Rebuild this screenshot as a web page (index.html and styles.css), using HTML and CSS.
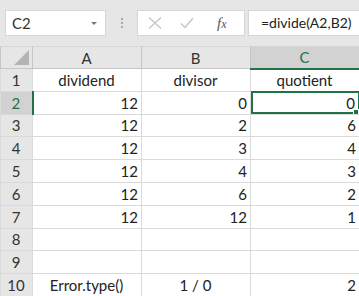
FILE: index.html
```
<!DOCTYPE html>
<html lang="en">
<head>
  <meta charset="UTF-8">
  <title>divide</title>
  <link rel="stylesheet" href="styles.css">
</head>
<body>

  <div class="toolbar">
    <div class="namebox">
      <span>C2</span>
      <span class="arrow"></span>
    </div>
    <div class="dots">
      <span></span><span></span><span></span>
    </div>
    <div class="fxbox">
      <svg class="cancel" width="14" height="12" viewBox="0 0 14 12">
        <path d="M1 0.5 L13 11.5 M13 0.5 L1 11.5" stroke="#c6c6c6" stroke-width="1.4" fill="none"/>
      </svg>
      <svg class="enter" width="14" height="12" viewBox="0 0 14 12">
        <path d="M1 6.5 L5 10.5 L13 1" stroke="#c6c6c6" stroke-width="1.4" fill="none"/>
      </svg>
      <span class="fx">f<i>x</i></span>
    </div>
    <div class="formula">=divide(A2,B2)</div>
  </div>

  <table class="sheet">
    <colgroup>
      <col class="c-rh">
      <col class="c-a">
      <col class="c-b">
      <col class="c-c">
    </colgroup>
    <tr class="colheads">
      <th class="corner"><span class="tri"></span></th>
      <th>A</th>
      <th>B</th>
      <th class="sel">C</th>
    </tr>
    <tr>
      <th class="rh">1</th>
      <td class="mid">dividend</td>
      <td class="mid">divisor</td>
      <td class="mid">quotient</td>
    </tr>
    <tr>
      <th class="rh sel">2</th>
      <td>12</td>
      <td>0</td>
      <td class="active">0<span class="handle"></span></td>
    </tr>
    <tr>
      <th class="rh">3</th>
      <td>12</td>
      <td>2</td>
      <td>6</td>
    </tr>
    <tr>
      <th class="rh">4</th>
      <td>12</td>
      <td>3</td>
      <td>4</td>
    </tr>
    <tr>
      <th class="rh">5</th>
      <td>12</td>
      <td>4</td>
      <td>3</td>
    </tr>
    <tr>
      <th class="rh">6</th>
      <td>12</td>
      <td>6</td>
      <td>2</td>
    </tr>
    <tr>
      <th class="rh">7</th>
      <td>12</td>
      <td>12</td>
      <td>1</td>
    </tr>
    <tr>
      <th class="rh">8</th>
      <td></td>
      <td></td>
      <td></td>
    </tr>
    <tr>
      <th class="rh">9</th>
      <td></td>
      <td></td>
      <td></td>
    </tr>
    <tr>
      <th class="rh">10</th>
      <td class="mid">Error.type()</td>
      <td class="mid">1 / 0</td>
      <td>2</td>
    </tr>
  </table>

</body>
</html>
```

FILE: styles.css
```
body {
  margin: 0;
  background-color: #fff;
  font-family: Lato, "Open Sans", sans-serif;
  color: #222;
  overflow: hidden;
}

.toolbar {
  display: flex;
  align-items: flex-start;
  height: 46px;
  padding: 10px 0 0 5px;
  box-sizing: border-box;
  background-color: #e6e6e6;
}

.namebox {
  display: flex;
  align-items: center;
  justify-content: space-between;
  width: 101px;
  height: 26px;
  padding: 0 8px 0 6px;
  box-sizing: border-box;
  background-color: #fff;
  border: 1px solid #d6d6d6;
  font-size: 15px;
  color: #333;
}

.arrow {
  width: 0;
  height: 0;
  border-left: 3px solid transparent;
  border-right: 3px solid transparent;
  border-top: 3px solid #777;
}

.dots {
  display: flex;
  flex-direction: column;
  gap: 2px;
  width: 31px;
  padding-top: 8px;
  align-items: center;
}

.dots span {
  width: 2px;
  height: 2px;
  background-color: #a8a8a8;
}

.fxbox {
  display: flex;
  align-items: center;
  width: 108px;
  height: 26px;
  box-sizing: border-box;
  background-color: #fff;
  border: 1px solid #d6d6d6;
}

.cancel {
  margin-left: 10px;
}

.enter {
  margin-left: 18px;
}

.fx {
  margin-left: 23px;
  font-family: "Liberation Serif", serif;
  font-style: italic;
  font-size: 15px;
  color: #555;
}

.fx i {
  font-size: 12px;
}

.formula {
  flex: 1;
  height: 26px;
  margin-left: 3px;
  padding-left: 12px;
  box-sizing: border-box;
  background-color: #fff;
  border: 1px solid #d6d6d6;
  border-right: none;
  font-size: 14px;
  line-height: 24px;
  color: #222;
  white-space: nowrap;
  overflow: hidden;
}

.sheet {
  border-collapse: collapse;
  table-layout: fixed;
  width: 359px;
}

.c-rh { width: 32px; }
.c-a { width: 109px; }
.c-b { width: 109px; }
.c-c { width: 109px; }

.sheet tr {
  height: 22.8px;
}

.sheet tr.colheads {
  height: 22px;
}

.sheet th,
.sheet td {
  padding: 0 3px 0 2px;
  border: 1px solid #dadada;
  font-size: 15px;
  line-height: 16px;
  white-space: nowrap;
  overflow: hidden;
}

.sheet td {
  text-align: right;
  position: relative;
}

.sheet td.mid {
  text-align: center;
}

.colheads th {
  background-color: #e6e6e6;
  border-color: #c6c6c6;
  border-top: 1px solid #d6d6d6;
  font-weight: normal;
  color: #333;
}

.colheads th.sel {
  background-color: #d2d2d2;
  color: #217346;
  border-bottom: 2px solid #217346;
}

.corner {
  position: relative;
}

.tri {
  position: absolute;
  right: 3px;
  bottom: 3px;
  width: 0;
  height: 0;
  border-left: 15px solid transparent;
  border-bottom: 15px solid #b4b4b4;
}

.rh {
  background-color: #e6e6e6;
  border-color: #c6c6c6;
  font-weight: normal;
  text-align: center;
  color: #333;
}

.rh.sel {
  background-color: #d2d2d2;
  color: #217346;
  border-right: 2px solid #217346;
}

.sheet td.active {
  padding-right: 4px;
  outline: 2px solid #217346;
  outline-offset: -2px;
}

.handle {
  position: absolute;
  right: 0;
  bottom: -1px;
  width: 4px;
  height: 4px;
  background-color: #217346;
  border: 1px solid #fff;
}
```
